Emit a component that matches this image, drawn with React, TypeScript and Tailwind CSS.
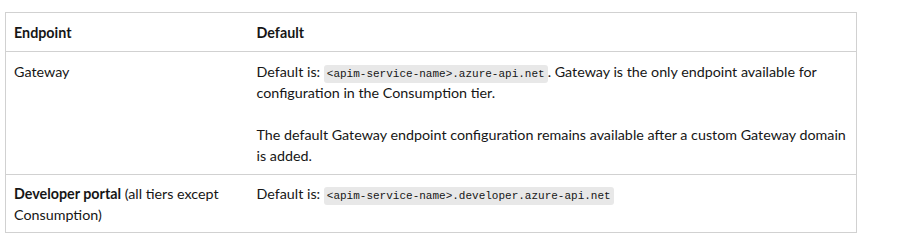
const Code = ({ children }: { children: string }) => (
  <code className="font-['Liberation_Mono',monospace] text-[11px] leading-none bg-[#e8e8e8] rounded-[3px] px-[3px] py-[3px]">
    {children}
  </code>
)

export default function App() {
  return (
    <div className="min-h-screen bg-white pt-[12px] pl-[5px] font-['Lato','Segoe_UI',sans-serif] text-[14.3px] leading-[21px] text-[#161616]">
      <table className="w-[852px] table-fixed border-collapse border border-[#d1d1d1]">
        <colgroup>
          <col className="w-[243px]" />
          <col />
        </colgroup>
        <thead>
          <tr className="border-b border-[#d1d1d1]">
            <th className="px-2 pt-[9px] pb-2 text-left align-top font-bold">Endpoint</th>
            <th className="px-2 pt-[9px] pb-2 text-left align-top font-bold">Default</th>
          </tr>
        </thead>
        <tbody>
          <tr className="border-b border-[#d1d1d1]">
            <td className="px-2 pt-[9px] pb-2 align-top">Gateway</td>
            <td className="px-2 pt-[9px] pb-2 align-top">
              <p>
                Default is: <Code>{"<apim-service-name>.azure-api.net"}</Code>. Gateway is the only endpoint available for
                configuration in the Consumption tier.
              </p>
              <p className="mt-[21px]">
                The default Gateway endpoint configuration remains available after a custom Gateway domain is added.
              </p>
            </td>
          </tr>
          <tr className="border-b border-[#d1d1d1]">
            <td className="px-2 pt-2 pb-[7px] align-top">
              <span className="font-bold">Developer portal</span> (all tiers except Consumption)
            </td>
            <td className="px-2 pt-2 pb-[7px] align-top">
              Default is: <Code>{"<apim-service-name>.developer.azure-api.net"}</Code>
            </td>
          </tr>
        </tbody>
      </table>
    </div>
  )
}
